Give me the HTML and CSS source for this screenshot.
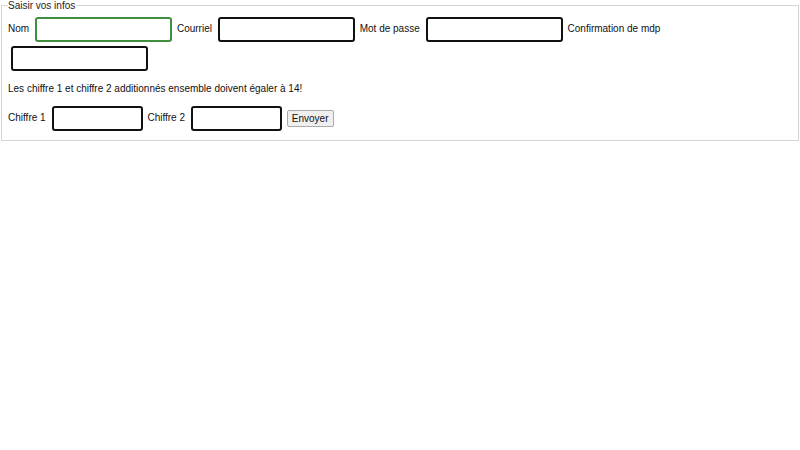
FILE: index.html
```html
<!DOCTYPE html>
<html lang="fr">
<head>
<meta charset="utf-8">
<title>Formulaire</title>
<link rel="stylesheet" href="styles.css">
</head>
<body>
<form class="form">
  <fieldset class="box">
    <legend class="legend">Saisir vos infos</legend>
    <div class="line">
      <label class="lbl">Nom</label><input class="field field-focus" type="text">
      <label class="lbl">Courriel</label><input class="field" type="text">
      <label class="lbl">Mot de passe</label><input class="field" type="password">
      <label class="lbl">Confirmation de mdp</label><input class="field" type="password">
    </div>
    <p class="note">Les chiffre 1 et chiffre 2 additionnés ensemble doivent égaler à 14!</p>
    <div class="line">
      <label class="lbl">Chiffre 1</label><input class="field field-num" type="text">
      <label class="lbl">Chiffre 2</label><input class="field field-num" type="text">
      <button class="btn" type="button">Envoyer</button>
    </div>
  </fieldset>
</form>
</body>
</html>
```
FILE: styles.css
```css
html, body {
  margin: 0;
  padding: 0;
  background: #fff;
}
body {
  font-family: "Liberation Sans", Arial, sans-serif;
  font-size: 10px;
  color: #111;
}
.box {
  margin: 0 1px;
  padding: 3px 6px 8px 6px;
  border: 1px solid #d4d4d4;
}
.legend {
  padding: 0 2px 0 0;
  font-size: 10px;
  color: #222;
}
.line {
  line-height: 29px;
}
.lbl {
  font-size: 10px;
  margin-right: 3px;
}
.field {
  box-sizing: border-box;
  width: 137px;
  height: 25px;
  margin: 0 2px 0 3px;
  border: 2px solid #111;
  border-radius: 3px;
  vertical-align: middle;
  font-family: inherit;
  font-size: 10px;
}
.field-focus {
  border: 2px solid #3f8f3f;
  outline: none;
}
.field-num {
  width: 91px;
}
.note {
  margin: 11px 0 9px;
  font-size: 10px;
}
.btn {
  font-family: inherit;
  font-size: 10px;
  padding: 2px 4px;
  margin-left: 0;
  border: 1px solid #aaa;
  border-radius: 2px;
  background: #efefef;
  color: #111;
  vertical-align: middle;
}
```
